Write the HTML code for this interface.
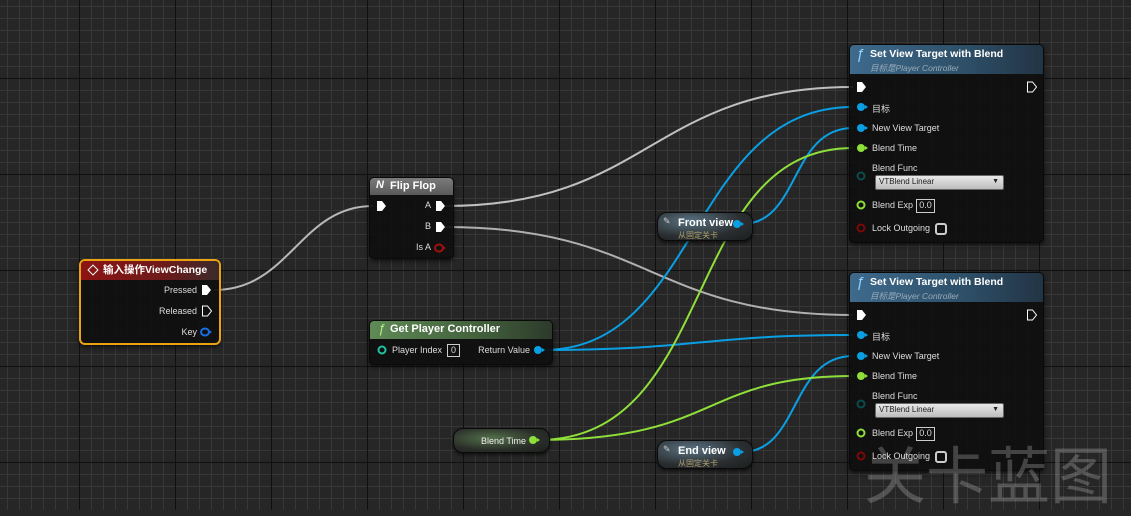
<!DOCTYPE html>
<html><head><meta charset="utf-8"><style>
*{margin:0;padding:0;box-sizing:border-box}
body{width:1131px;height:510px;overflow:hidden;background:#262626;font-family:"Liberation Sans","Noto Sans CJK SC",sans-serif;position:relative;color:#ddd}
.grid{position:absolute;inset:0;
background-image:
linear-gradient(to right,#101010 0 1px,transparent 1px),
linear-gradient(to bottom,#101010 0 1px,transparent 1px),
linear-gradient(to right,#373737 0 1px,transparent 1px),
linear-gradient(to bottom,#373737 0 1px,transparent 1px);
background-size:96px 96px,96px 96px,12px 12px,12px 12px;
background-position:79px 0,0 78px,7px 0,0 6px}
.node{position:absolute;background:rgba(14,15,14,.93);border-radius:5px;box-shadow:0 2px 4px rgba(0,0,0,.6);border:1px solid #0a0a0a}
.hdr{position:absolute;left:0;right:0;top:0;border-radius:4px 4px 0 0;color:#fff;font-weight:bold;font-size:11px;padding-left:20px}
.t{position:absolute;font-size:9px;color:#ddd;white-space:nowrap}
svg{position:absolute;left:0;top:0}
.pill{position:absolute;border-radius:10px;border:1px solid #0a0a0a;box-shadow:0 2px 3px rgba(0,0,0,.6)}
.box{position:absolute;border:1px solid #ccc;font-size:9px;color:#ddd;text-align:center;line-height:11px}
.dd{position:absolute;background:linear-gradient(#e8e8e8,#bdbdbd);border:1px solid #666;border-radius:2px;font-size:8px;color:#222;padding-left:3px;line-height:12px}
.wm{position:absolute;left:864px;top:436px;font-size:62px;color:rgba(200,200,200,.28);font-family:"Noto Sans CJK SC",sans-serif;line-height:70px}
</style></head><body>
<div class="grid"></div>

<svg width="1131" height="510" fill="none" stroke-width="2">
<path d="M214,290 C290,290 300,206 373,206" stroke="#b8b8b8"/>
<path d="M445,206 C650,206 650,87 853,87" stroke="#c0c0c0"/>
<path d="M445,227 C650,227 650,315 853,315" stroke="#b0b0b0"/>
<path d="M543,350 C700,350 690,107 853,107" stroke="#0a9fe3"/>
<path d="M543,350 C700,350 700,335 853,335" stroke="#0a9fe3"/>
<path d="M742,224 C800,224 790,128 853,128" stroke="#0a9fe3"/>
<path d="M742,452 C800,452 790,356 853,356" stroke="#0a9fe3"/>
<path d="M538,440 C720,440 680,148 853,148" stroke="#8fdf3a"/>
<path d="M538,440 C720,440 700,376 853,376" stroke="#8fdf3a"/>
</svg>

<div class="node" style="left:79px;top:259px;width:142px;height:86px;border:2px solid #e8a212;border-radius:6px">
 <div class="hdr" style="height:19px;background:linear-gradient(90deg,#8c1414,#6e1a1a 60%,#3a2a2a);line-height:18px;padding-left:22px;font-size:10.5px">输入操作ViewChange</div>
 <div style="position:absolute;left:8px;top:5px;width:8px;height:8px;border:1.5px solid #fff;transform:rotate(45deg)"></div>
 <div class="t" style="right:22px;top:24px">Pressed</div>
 <div class="t" style="right:22px;top:45px">Released</div>
 <div class="t" style="right:22px;top:66px">Key</div>
</div>
<svg width="1131" height="510">
<path d="M202,285 h5 l4,5 l-4,5 h-5z" fill="#fff"/>
<path d="M202.5,306 h5 l4,5 l-4,5 h-5z" fill="none" stroke="#fff"/>
<ellipse cx="205" cy="332" rx="4" ry="3.5" fill="none" stroke="#1a6ce0" stroke-width="2"/><path d="M209,330 l3,2 l-3,2z" fill="#1a6ce0"/>
</svg>

<div class="node" style="left:369px;top:177px;width:85px;height:82px">
 <div class="hdr" style="height:17px;background:linear-gradient(#7b7b7b,#5a5a5a);line-height:16px">Flip Flop</div>
 <div style="position:absolute;left:6px;top:1px;font-size:11px;color:#fff;font-style:italic;font-weight:bold">N</div>
 <div class="t" style="right:22px;top:22px">A</div>
 <div class="t" style="right:22px;top:43px">B</div>
 <div class="t" style="right:22px;top:64px">Is A</div>
</div>
<svg width="1131" height="510">
<path d="M377,201 h5 l4,5 l-4,5 h-5z" fill="#fff"/>
<path d="M436,201 h5 l4,5 l-4,5 h-5z" fill="#fff"/>
<path d="M436,222 h5 l4,5 l-4,5 h-5z" fill="#fff"/>
<ellipse cx="439" cy="248" rx="4" ry="3.5" fill="none" stroke="#a01010" stroke-width="2"/><path d="M443,246 l3,2 l-3,2z" fill="#a01010"/>
</svg>

<div class="node" style="left:369px;top:320px;width:184px;height:45px">
 <div class="hdr" style="height:18px;background:linear-gradient(90deg,#5f8a55,#42603c 60%,#2d3a2b);line-height:17px">Get Player Controller</div>
 <div style="position:absolute;left:8px;top:0px;font-size:13px;color:#aef08a;font-style:italic">ƒ</div>
 <div class="t" style="left:22px;top:24px">Player Index</div>
 <div class="box" style="left:77px;top:23px;width:13px;height:13px">0</div>
 <div class="t" style="right:22px;top:24px">Return Value</div>
</div>
<svg width="1131" height="510">
<circle cx="382" cy="350" r="3.5" fill="none" stroke="#20c0a0" stroke-width="2"/>
<circle cx="538" cy="350" r="4" fill="#0a9fe3"/><path d="M542,348 l3,2 l-3,2z" fill="#0a9fe3"/>
</svg>

<div class="node" style="left:849px;top:44px;width:195px;height:199px">
 <div class="hdr" style="height:29px;background:linear-gradient(90deg,#3e6a8c,#2d4f68 60%,#223444);">
  <div style="position:absolute;left:20px;top:3px;font-size:10.5px">Set View Target with Blend</div>
  <div style="position:absolute;left:20px;top:17px;font-size:8.5px;font-weight:normal;color:#9aaab8;font-style:italic">目标是Player Controller</div>
 </div>
 <div style="position:absolute;left:6px;top:1px;font-size:15px;color:#8fd0ff;font-style:italic">ƒ</div>
 <div class="t" style="left:22px;top:57px">目标</div>
 <div class="t" style="left:22px;top:78px">New View Target</div>
 <div class="t" style="left:22px;top:98px">Blend Time</div>
 <div class="t" style="left:22px;top:118px">Blend Func</div>
 <div class="dd" style="left:25px;top:130px;width:129px;height:15px">VTBlend Linear<span style="position:absolute;right:4px;top:0;font-size:7px">▼</span></div>
 <div class="t" style="left:22px;top:155px">Blend Exp</div>
 <div class="box" style="left:66px;top:154px;width:19px;height:14px">0.0</div>
 <div class="t" style="left:22px;top:178px">Lock Outgoing</div>
 <div style="position:absolute;left:85px;top:178px;width:12px;height:12px;border:2px solid #ccc;border-radius:3px"></div>
</div>
<div class="node" style="left:849px;top:272px;width:195px;height:199px">
 <div class="hdr" style="height:29px;background:linear-gradient(90deg,#3e6a8c,#2d4f68 60%,#223444);">
  <div style="position:absolute;left:20px;top:3px;font-size:10.5px">Set View Target with Blend</div>
  <div style="position:absolute;left:20px;top:17px;font-size:8.5px;font-weight:normal;color:#9aaab8;font-style:italic">目标是Player Controller</div>
 </div>
 <div style="position:absolute;left:6px;top:1px;font-size:15px;color:#8fd0ff;font-style:italic">ƒ</div>
 <div class="t" style="left:22px;top:57px">目标</div>
 <div class="t" style="left:22px;top:78px">New View Target</div>
 <div class="t" style="left:22px;top:98px">Blend Time</div>
 <div class="t" style="left:22px;top:118px">Blend Func</div>
 <div class="dd" style="left:25px;top:130px;width:129px;height:15px">VTBlend Linear<span style="position:absolute;right:4px;top:0;font-size:7px">▼</span></div>
 <div class="t" style="left:22px;top:155px">Blend Exp</div>
 <div class="box" style="left:66px;top:154px;width:19px;height:14px">0.0</div>
 <div class="t" style="left:22px;top:178px">Lock Outgoing</div>
 <div style="position:absolute;left:85px;top:178px;width:12px;height:12px;border:2px solid #ccc;border-radius:3px"></div>
</div>
<svg width="1131" height="510">
<g id="p1">
<path d="M857,82 h5 l4,5 l-4,5 h-5z" fill="#fff"/>
<path d="M1027.5,82 h5 l4,5 l-4,5 h-5z" fill="none" stroke="#fff"/>
<circle cx="861" cy="107" r="4" fill="#0a9fe3"/><path d="M865,105 l3,2 l-3,2z" fill="#0a9fe3"/>
<circle cx="861" cy="128" r="4" fill="#0a9fe3"/><path d="M865,126 l3,2 l-3,2z" fill="#0a9fe3"/>
<circle cx="861" cy="148" r="4" fill="#8fdf3a"/><path d="M865,146 l3,2 l-3,2z" fill="#8fdf3a"/>
<circle cx="861" cy="176" r="3.5" fill="none" stroke="#0a4c4c" stroke-width="2"/>
<circle cx="861" cy="205" r="3.5" fill="none" stroke="#8fdf3a" stroke-width="2"/>
<circle cx="861" cy="228" r="3.5" fill="none" stroke="#7a0a0a" stroke-width="2"/>
</g>
<use href="#p1" y="228"/>
</svg>

<div class="pill" style="left:657px;top:212px;width:96px;height:29px;background:radial-gradient(ellipse at 35% 30%,#5a7282,#2a2e30 60%,#1c1e1e)">
 <div style="position:absolute;left:5px;top:3px;font-size:9px;color:#ccc">✎</div>
 <div style="position:absolute;left:20px;top:4px;font-size:11px;font-weight:bold;color:#fff">Front view</div>
 <div style="position:absolute;left:20px;top:17px;font-size:8px;color:#b0a070">从固定关卡</div>
</div>
<div class="pill" style="left:657px;top:440px;width:96px;height:29px;background:radial-gradient(ellipse at 35% 30%,#5a7282,#2a2e30 60%,#1c1e1e)">
 <div style="position:absolute;left:5px;top:3px;font-size:9px;color:#ccc">✎</div>
 <div style="position:absolute;left:20px;top:4px;font-size:11px;font-weight:bold;color:#fff">End view</div>
 <div style="position:absolute;left:20px;top:17px;font-size:8px;color:#b0a070">从固定关卡</div>
</div>
<div class="pill" style="left:453px;top:428px;width:97px;height:25px;background:radial-gradient(ellipse at 40% 40%,#53704a,#2a2e29 60%,#1c1e1c)">
 <div style="position:absolute;left:27px;top:7px;font-size:9px;color:#eee">Blend Time</div>
</div>
<svg width="1131" height="510">
<circle cx="737" cy="224" r="4" fill="#0a9fe3"/><path d="M741,222 l3,2 l-3,2z" fill="#0a9fe3"/>
<circle cx="737" cy="452" r="4" fill="#0a9fe3"/><path d="M741,450 l3,2 l-3,2z" fill="#0a9fe3"/>
<circle cx="533" cy="440" r="4" fill="#8fdf3a"/><path d="M537,438 l3,2 l-3,2z" fill="#8fdf3a"/>
</svg>

<div class="wm">关卡蓝图</div>
</body></html>
